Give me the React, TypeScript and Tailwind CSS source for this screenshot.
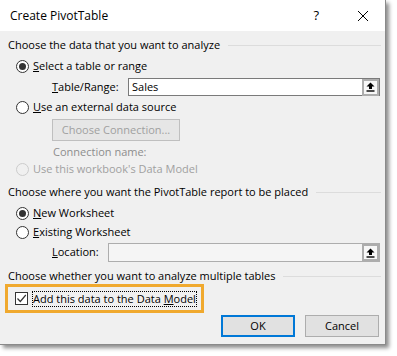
import React from "react";

function Radio({ checked, disabled }: { checked?: boolean; disabled?: boolean }) {
  return (
    <span
      className={`flex h-[13px] w-[13px] shrink-0 items-center justify-center rounded-full border ${
        disabled ? "border-[#cccccc] bg-[#f0f0f0]" : "border-[#333333] bg-white"
      }`}
    >
      {checked && <span className="h-[7px] w-[7px] rounded-full bg-[#333333]" />}
    </span>
  );
}

function SectionHeader({ title, className }: { title: string; className: string }) {
  return (
    <div className={`flex h-[16px] items-center pl-[8px] pr-[4px] ${className}`}>
      <span className="whitespace-nowrap">{title}</span>
      <span className="ml-[8px] h-px flex-1 bg-[#dcdcdc]" />
    </div>
  );
}

function PickButton() {
  return (
    <span className="flex h-[17px] w-[17px] items-center justify-center border-2 border-[#adadad] bg-[#f7f7f7]">
      <svg width="9" height="10" viewBox="0 0 9 10">
        <path d="M4.5 0.5 L8.5 4.5 L6 4.5 L6 7 L3 7 L3 4.5 L0.5 4.5 Z" fill="#000" />
        <rect x="0.5" y="8.3" width="8" height="1.4" fill="#000" />
      </svg>
    </span>
  );
}

export default function App() {
  return (
    <div className="h-[356px] w-[397px] bg-white font-['Open_Sans',sans-serif] text-[11px] text-black">
      <div className="flex h-[345px] w-[386px] flex-col border-r border-b border-[#8a8a8a] bg-[#f0f0f0] shadow-[3px_3px_4px_rgba(0,0,0,0.45)]">
        {/* title bar */}
        <div className="flex h-[31px] shrink-0 items-center bg-white pl-[10px] pr-[16px]">
          <span className="flex-1 text-[12px]">Create PivotTable</span>
          <span className="mr-[38px] text-[13px]">?</span>
          <svg width="12" height="12" viewBox="0 0 12 12">
            <path d="M1 1 L11 11 M11 1 L1 11" stroke="#000" strokeWidth="1" />
          </svg>
        </div>

        <SectionHeader title="Choose the data that you want to analyze" className="mt-[6px]" />

        <div className="mt-[5px] flex h-[16px] items-center gap-[4px] pl-[16px]">
          <Radio checked />
          <span>
            <u>S</u>elect a table or range
          </span>
        </div>

        <div className="mt-[4px] flex h-[18px] items-center pr-[5px]">
          <span className="w-[128px] shrink-0 pl-[52px]">
            <u>T</u>able/Range:
          </span>
          <div className="flex h-[18px] flex-1 items-center border border-[#7a7a7a] bg-white pl-[3px]">
            <span className="flex-1">Sales</span>
            <PickButton />
          </div>
        </div>

        <div className="mt-[3px] flex h-[16px] items-center gap-[4px] pl-[16px]">
          <Radio />
          <span>
            <u>U</u>se an external data source
          </span>
        </div>

        <div className="mt-[4px] flex h-[22px] pl-[52px]">
          <div className="flex w-[128px] items-center justify-center border border-[#bfbfbf] bg-[#e6e6e6] text-[#a0a0a0]">
            Choose Connection...
          </div>
        </div>

        <div className="mt-[3px] flex h-[16px] items-center pl-[53px] text-[#8d8d8d]">
          Connection name:
        </div>

        <div className="mt-[1px] flex h-[16px] items-center gap-[4px] pl-[16px] text-[#a0a0a0]">
          <Radio disabled />
          <span>Use this workbook's Data Model</span>
        </div>

        <SectionHeader
          title="Choose where you want the PivotTable report to be placed"
          className="mt-[7px]"
        />

        <div className="mt-[5px] flex h-[16px] items-center gap-[4px] pl-[16px]">
          <Radio checked />
          <span>
            <u>N</u>ew Worksheet
          </span>
        </div>

        <div className="mt-[3px] flex h-[16px] items-center gap-[4px] pl-[16px]">
          <Radio />
          <span>
            <u>E</u>xisting Worksheet
          </span>
        </div>

        <div className="mt-[3px] flex h-[19px] items-center pr-[5px]">
          <span className="w-[108px] shrink-0 pl-[52px]">
            <u>L</u>ocation:
          </span>
          <div className="flex h-[19px] flex-1 items-center justify-end border border-[#adadad] bg-[#f5f5f5]">
            <PickButton />
          </div>
        </div>

        <SectionHeader
          title="Choose whether you want to analyze multiple tables"
          className="mt-[6px]"
        />

        <div className="ml-[5px] flex h-[29px] w-[199px] items-center border-[3px] border-[#f0a92e] pl-[7px]">
          <span className="flex h-[13px] w-[13px] shrink-0 items-center justify-center border border-[#333333] bg-white">
            <svg width="11" height="11" viewBox="0 0 11 11">
              <path d="M1.5 5.5 L4.3 8.5 L9.8 2" stroke="#333" strokeWidth="1.2" fill="none" />
            </svg>
          </span>
          <span className="ml-[4px] whitespace-nowrap border border-dotted border-black leading-[14px]">
            Add this data to the Data <u>M</u>odel
          </span>
        </div>

        <div className="mt-[2px] flex h-[22px] justify-end gap-[10px] pr-[6px]">
          <div className="flex w-[74px] items-center justify-center border-2 border-[#0078d7] bg-[#e1e1e1]">
            OK
          </div>
          <div className="flex w-[74px] items-center justify-center border border-[#adadad] bg-[#e1e1e1]">
            Cancel
          </div>
        </div>
      </div>
    </div>
  );
}
